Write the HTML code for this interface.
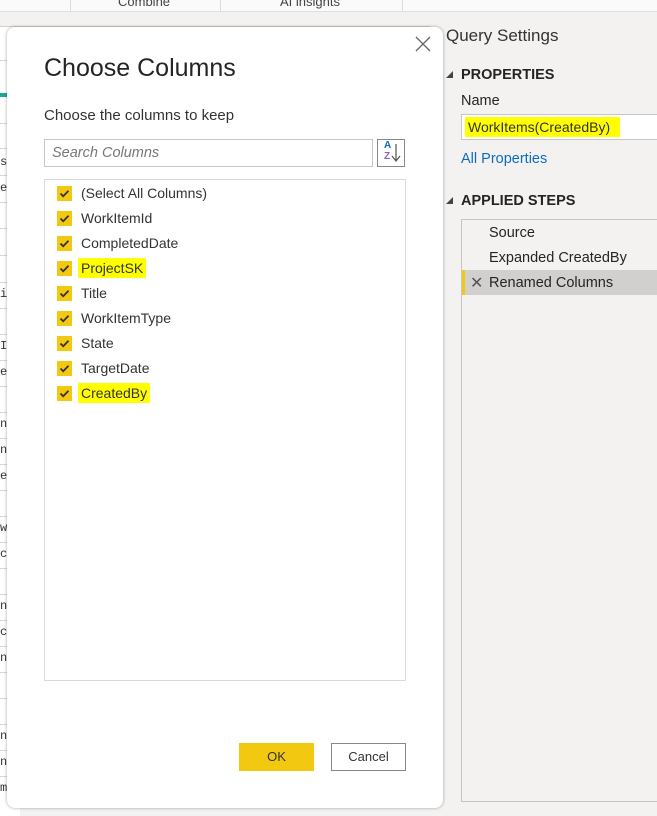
<!DOCTYPE html>
<html><head><meta charset="utf-8"><style>
*{margin:0;padding:0;box-sizing:border-box}
body{width:657px;height:816px;overflow:hidden;background:#f3f2f1;font-family:"Liberation Sans",sans-serif;position:relative;color:#252423}
.abs{position:absolute}
.top{left:0;top:0;width:657px;height:12px;background:#fafafa;border-bottom:1px solid #e1dfdd}
.topt{top:-6px;font-size:13px;color:#444}
.sub{left:0;top:12px;width:430px;height:15px;background:#f3f2f1;border-bottom:1px solid #d0d0d0}
.grid{left:0;top:27px;width:20px;height:789px;background:#fff}
.gl{left:0;width:20px;height:1px;background:#d8d8d8}
.gc{left:0;font-family:"Liberation Mono",monospace;font-size:12px;color:#333}
.dlg{left:7px;top:27px;width:436px;height:781px;background:#fff;border-radius:8px;box-shadow:0 0 3px rgba(0,0,0,.35)}
.cb{width:15px;height:15px;background:#f2c811}
.lbl{font-size:14px;color:#333}
.hl{background:#ffff00;padding:2px 3px;margin-left:-3px}
</style></head><body>
<div class="abs top"></div>
<div class="abs topt" style="left:118px">Combine</div>
<div class="abs topt" style="left:280px">AI insights</div>
<div class="abs" style="left:70px;top:0;width:1px;height:12px;background:#ddd"></div>
<div class="abs" style="left:220px;top:0;width:1px;height:12px;background:#ddd"></div>
<div class="abs" style="left:402px;top:0;width:1px;height:12px;background:#ddd"></div>
<div class="abs sub"></div>
<div class="abs grid"></div>
<div class="abs" style="left:0;top:93px;width:20px;height:4px;background:#1aa89a"></div>
<div class="abs gl" style="top:60px"></div><div class="abs gl" style="top:123px"></div>
<div class="abs gl" style="top:148px"></div><div class="abs gl" style="top:175px"></div>
<div class="abs gl" style="top:202px"></div><div class="abs gl" style="top:228px"></div>
<div class="abs gl" style="top:255px"></div><div class="abs gl" style="top:282px"></div>
<div class="abs gl" style="top:308px"></div><div class="abs gl" style="top:334px"></div>
<div class="abs gl" style="top:360px"></div><div class="abs gl" style="top:386px"></div>
<div class="abs gl" style="top:412px"></div><div class="abs gl" style="top:438px"></div>
<div class="abs gl" style="top:464px"></div><div class="abs gl" style="top:490px"></div>
<div class="abs gl" style="top:516px"></div><div class="abs gl" style="top:542px"></div>
<div class="abs gl" style="top:568px"></div><div class="abs gl" style="top:594px"></div>
<div class="abs gl" style="top:620px"></div><div class="abs gl" style="top:646px"></div>
<div class="abs gl" style="top:672px"></div><div class="abs gl" style="top:698px"></div>
<div class="abs gl" style="top:724px"></div><div class="abs gl" style="top:750px"></div>
<div class="abs gl" style="top:776px"></div>
<div class="abs gc" style="top:155px">s</div><div class="abs gc" style="top:181px">e</div>
<div class="abs gc" style="top:287px">i</div><div class="abs gc" style="top:339px">I</div>
<div class="abs gc" style="top:365px">e</div><div class="abs gc" style="top:417px">n</div>
<div class="abs gc" style="top:443px">n</div><div class="abs gc" style="top:469px">e</div>
<div class="abs gc" style="top:521px">w</div><div class="abs gc" style="top:547px">c</div>
<div class="abs gc" style="top:599px">n</div><div class="abs gc" style="top:625px">c</div>
<div class="abs gc" style="top:651px">n</div><div class="abs gc" style="top:729px">n</div>
<div class="abs gc" style="top:755px">n</div><div class="abs gc" style="top:781px">m</div>

<!-- right panel -->
<div class="abs" style="left:446px;top:26px;font-size:17px;color:#333">Query Settings</div>
<div class="abs" style="left:446px;top:71px;width:0;height:0;border-left:7px solid transparent;border-bottom:7px solid #444"></div>
<div class="abs" style="left:461px;top:67px;font-size:14.5px;font-weight:bold;color:#252423">PROPERTIES</div>
<div class="abs" style="left:461px;top:93px;font-size:14.5px">Name</div>
<div class="abs" style="left:461px;top:114px;width:196px;height:26px;background:#fff;border:1px solid #c8c6c4;border-right:none"></div>
<div class="abs" style="left:465px;top:117px;width:155px;height:20px;background:#ffff00;font-size:14px;line-height:20px;padding-left:3px;color:#333">WorkItems(CreatedBy)</div>
<div class="abs" style="left:461px;top:151px;font-size:14.5px;color:#0f6cbd">All Properties</div>
<div class="abs" style="left:446px;top:197px;width:0;height:0;border-left:7px solid transparent;border-bottom:7px solid #444"></div>
<div class="abs" style="left:461px;top:193px;font-size:14.5px;font-weight:bold">APPLIED STEPS</div>
<div class="abs" style="left:461px;top:219px;width:196px;height:583px;border:1px solid #c8c6c4;border-right:none;background:#f3f2f1"></div>
<div class="abs" style="left:489px;top:225px;font-size:14.5px">Source</div>
<div class="abs" style="left:489px;top:250px;font-size:14.5px">Expanded CreatedBy</div>
<div class="abs" style="left:462px;top:270px;width:195px;height:25px;background:#d2d0ce;border-left:3px solid #f2c811"></div>
<div class="abs" style="left:470px;top:273px;font-size:16px;color:#555">✕</div>
<div class="abs" style="left:489px;top:275px;font-size:14.5px">Renamed Columns</div>

<!-- dialog -->
<div class="abs dlg"></div>
<svg class="abs" style="left:415px;top:36px" width="16" height="16"><path d="M1 1L15 15M15 1L1 15" stroke="#666" stroke-width="1.3"/></svg>
<div class="abs" style="left:44px;top:54px;font-size:25px;font-weight:500;color:#252423">Choose Columns</div>
<div class="abs" style="left:44px;top:107px;font-size:15px;color:#333">Choose the columns to keep</div>
<div class="abs" style="left:44px;top:139px;width:329px;height:28px;border:1px solid #c8c6c4;font-size:14.5px;font-style:italic;color:#777;padding:5px 0 0 7px">Search Columns</div>
<div class="abs" style="left:377px;top:139px;width:28px;height:28px;border:1px solid #888;background:#fff"></div>
<div class="abs" style="left:384px;top:141px;font-size:10px;line-height:10px;color:#0f6cbd;font-weight:bold">A</div>
<div class="abs" style="left:384px;top:152px;font-size:10px;line-height:10px;color:#8764b8;font-weight:bold">Z</div>
<svg class="abs" style="left:391px;top:143px" width="10" height="20"><path d="M5 1V18M1 13L5 18L9 13" stroke="#555" fill="none" stroke-width="1.2"/></svg>
<div class="abs" style="left:44px;top:179px;width:362px;height:502px;border:1px solid #dadada"></div>

<div class="abs" style="left:57px;top:186px">
 <div style="position:relative">
 </div>
</div>
<svg width="0" height="0" style="position:absolute"><defs><symbol id="c" viewBox="0 0 15 15"><rect width="15" height="15" fill="#f2c811"/><path d="M3.5 7.5L6.2 10.2L11.5 4.8" stroke="#333" stroke-width="1.8" fill="none"/></symbol></defs></svg>
<svg class="abs" style="left:57px;top:186px" width="15" height="15"><use href="#c"/></svg>
<svg class="abs" style="left:57px;top:211px" width="15" height="15"><use href="#c"/></svg>
<svg class="abs" style="left:57px;top:236px" width="15" height="15"><use href="#c"/></svg>
<svg class="abs" style="left:57px;top:261px" width="15" height="15"><use href="#c"/></svg>
<svg class="abs" style="left:57px;top:286px" width="15" height="15"><use href="#c"/></svg>
<svg class="abs" style="left:57px;top:311px" width="15" height="15"><use href="#c"/></svg>
<svg class="abs" style="left:57px;top:336px" width="15" height="15"><use href="#c"/></svg>
<svg class="abs" style="left:57px;top:361px" width="15" height="15"><use href="#c"/></svg>
<svg class="abs" style="left:57px;top:386px" width="15" height="15"><use href="#c"/></svg>
<div class="abs lbl" style="left:81px;top:185px">(Select All Columns)</div>
<div class="abs lbl" style="left:81px;top:210px">WorkItemId</div>
<div class="abs lbl" style="left:81px;top:235px">CompletedDate</div>
<div class="abs lbl hl" style="left:81px;top:258px">ProjectSK</div>
<div class="abs lbl" style="left:81px;top:285px">Title</div>
<div class="abs lbl" style="left:81px;top:310px">WorkItemType</div>
<div class="abs lbl" style="left:81px;top:335px">State</div>
<div class="abs lbl" style="left:81px;top:360px">TargetDate</div>
<div class="abs lbl hl" style="left:81px;top:383px">CreatedBy</div>

<div class="abs" style="left:239px;top:743px;width:75px;height:28px;background:#f2c811;font-size:13px;text-align:center;line-height:28px;color:#333">OK</div>
<div class="abs" style="left:331px;top:743px;width:75px;height:28px;background:#fff;border:1px solid #8a8886;font-size:13px;text-align:center;line-height:26px;color:#333">Cancel</div>
</body></html>
